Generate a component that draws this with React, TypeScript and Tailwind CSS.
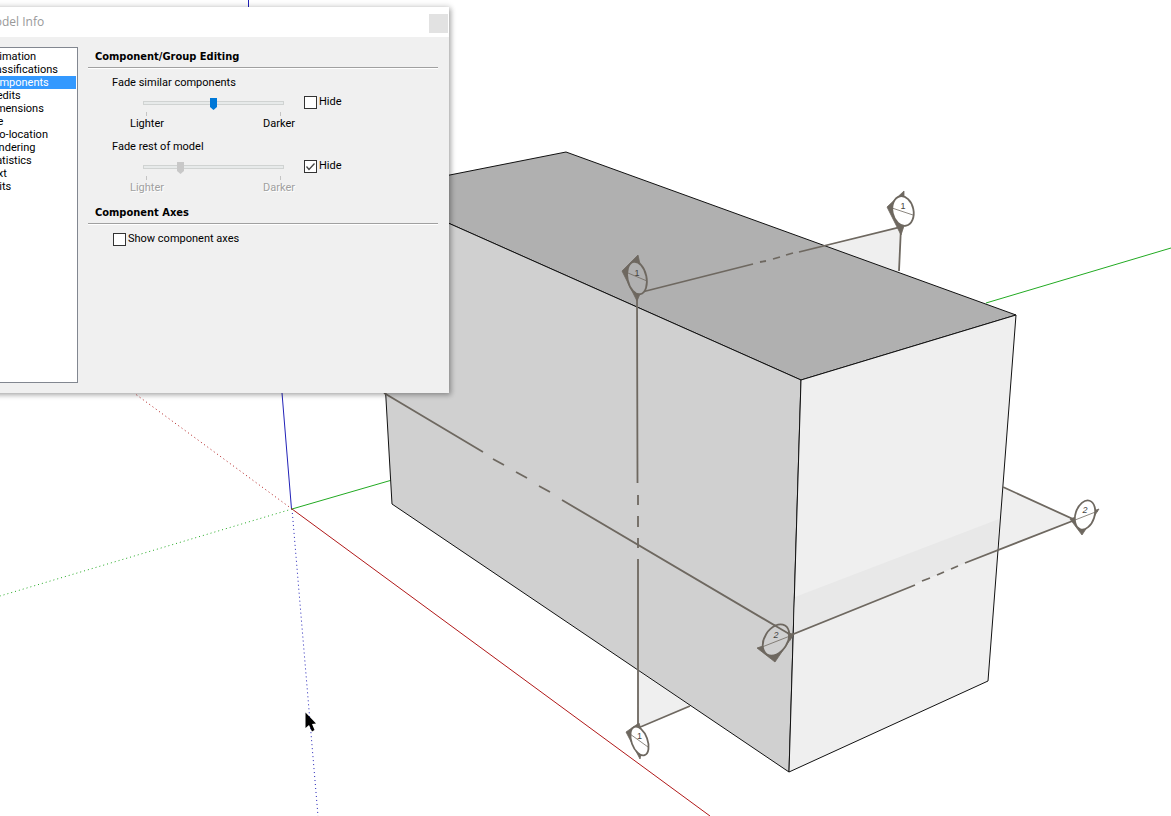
import React, { useState } from "react"

const categories = [
  "Animation",
  "Classifications",
  "Components",
  "Credits",
  "Dimensions",
  "File",
  "Geo-location",
  "Rendering",
  "Statistics",
  "Text",
  "Units",
]

interface CheckProps {
  label: string
  checked: boolean
  onChange: (value: boolean) => void
}

function Check({ label, checked, onChange }: CheckProps) {
  return (
    <label className="flex items-center gap-0.5 leading-4">
      <span className="relative flex">
        <input
          type="checkbox"
          checked={checked}
          onChange={(e) => onChange(e.target.checked)}
          className="size-[13px] appearance-none border border-[#333] bg-white"
        />
        {checked && (
          <svg viewBox="0 0 13 13" className="pointer-events-none absolute inset-0 size-full">
            <path d="M2.5 6.5 5 9.5 10.5 3.5" fill="none" stroke="#444" strokeWidth="1.3" />
          </svg>
        )}
      </span>
      {label}
    </label>
  )
}

interface FadeControlProps {
  title: string
  initial: number
  initialHidden: boolean
}

function FadeControl({ title, initial, initialHidden }: FadeControlProps) {
  const [value, setValue] = useState(initial)
  const [hidden, setHidden] = useState(initialHidden)

  return (
    <div className="mt-[7px] pl-6">
      <p className="leading-4">{title}</p>
      <div className="flex items-start">
        <div className="flex w-[192px] flex-col">
          <div className="ml-[31px] w-[141px] pt-1.5">
            <input
              type="range"
              aria-label={title}
              min={0}
              max={100}
              value={value}
              disabled={hidden}
              onChange={(e) => setValue(Number(e.target.value))}
              className="block h-3 w-full appearance-none bg-transparent [&::-webkit-slider-runnable-track]:h-1 [&::-webkit-slider-runnable-track]:border [&::-webkit-slider-runnable-track]:border-[#d0d3d2] [&::-webkit-slider-runnable-track]:bg-[#e7eaea] [&::-webkit-slider-thumb]:-mt-1 [&::-webkit-slider-thumb]:h-3 [&::-webkit-slider-thumb]:w-[7px] [&::-webkit-slider-thumb]:appearance-none [&::-webkit-slider-thumb]:bg-[#0078d7] [&::-webkit-slider-thumb]:[clip-path:polygon(0_0,100%_0,100%_75%,50%_100%,0_75%)] disabled:[&::-webkit-slider-thumb]:bg-[#c8c8c8]"
            />
            <div className="mt-[3px] flex h-1 justify-between px-[3px]">
              <span className="w-px bg-[#c4c4c4]" />
              <span className="w-px bg-[#c4c4c4]" />
            </div>
          </div>
          <div className={hidden ? "flex justify-between pr-[9px] pl-[18px] leading-4 text-[#a0a0a0] [text-shadow:1px_1px_#fff]" : "flex justify-between pr-[9px] pl-[18px] leading-4"}>
            <span>Lighter</span>
            <span>Darker</span>
          </div>
        </div>
        <div className="pt-[3px]">
          <Check label="Hide" checked={hidden} onChange={setHidden} />
        </div>
      </div>
    </div>
  )
}

function ModelInfo() {
  const [selected, setSelected] = useState("Components")
  const [showAxes, setShowAxes] = useState(false)

  return (
    <section className="absolute top-[7px] -left-[26px] w-[475px] bg-[#f0f0f0] font-[Roboto,'Noto_Sans',sans-serif] text-[11px] text-black shadow-[0_0_6px_1px_rgba(0,0,0,0.14),2px_2px_5px_rgba(0,0,0,0.25)]">
      <header className="flex h-[30px] items-center justify-between bg-white pr-px pl-2.5">
        <h1 className="font-['Open_Sans',sans-serif] text-[12px] text-[#999]">Model Info</h1>
        <button aria-label="Close" className="mt-0.5 size-[19px] bg-[#e2e2e2]" />
      </header>

      <div className="flex gap-2.5 pt-2.5 pr-[11px] pb-2.5 pl-2">
        <ul className="h-[336px] w-24 shrink-0 border border-[#828790] bg-white pt-[2px] pr-px">
          {categories.map((name) => (
            <li key={name}>
              <button
                onClick={() => setSelected(name)}
                className={name === selected ? "block w-full bg-[#3399ff] pl-[3px] text-left leading-[13px] text-white" : "block w-full pl-[3px] text-left leading-[13px]"}
              >
                {name}
              </button>
            </li>
          ))}
        </ul>

        <div className="flex-1 pt-px">
          <h2 className="border-b border-[#a0a0a0] pt-px pb-[2px] pl-[7px] font-['DejaVu_Sans_Condensed',sans-serif] leading-4 font-bold shadow-[0_1px_#fff]">Component/Group Editing</h2>
          <FadeControl title="Fade similar components" initial={50} initialHidden={false} />
          <FadeControl title="Fade rest of model" initial={25} initialHidden={true} />

          <h2 className="mt-2 border-b border-[#a0a0a0] pt-px pb-[2px] pl-[7px] font-['DejaVu_Sans_Condensed',sans-serif] leading-4 font-bold shadow-[0_1px_#fff]">Component Axes</h2>
          <div className="mt-[7px] pl-[25px]">
            <Check label="Show component axes" checked={showAxes} onChange={setShowAxes} />
          </div>
        </div>
      </div>
    </section>
  )
}

interface MarkerProps {
  label: string
  cx: number
  cy: number
  rx: number
  ry: number
  tilt: number
  arrow: string
  rule: string
  fill: string
}

// Section plane symbol: filled arrow behind a tilted circle
function Marker({ label, cx, cy, rx, ry, tilt, arrow, rule, fill }: MarkerProps) {
  return (
    <g>
      <path d={arrow} fill="#6e6860" stroke="#6e6860" strokeWidth="0.8" />
      <ellipse cx={cx} cy={cy} rx={rx} ry={ry} transform={`rotate(${tilt} ${cx} ${cy})`} fill={fill} stroke="#6e6860" strokeWidth="1.8" />
      <path d={rule} stroke="#6e6860" strokeWidth="0.8" />
      <text x={cx} y={cy - 2} textAnchor="middle" fontSize="9" fontStyle={label === "2" ? "italic" : "normal"} fontFamily="Liberation Sans, sans-serif" fill="#444">{label}</text>
    </g>
  )
}

function Scene() {
  return (
    <svg viewBox="0 0 1171 816" preserveAspectRatio="xMinYMin slice" className="block h-screen w-full">
      {/* Axes */}
      <g fill="none" strokeWidth="1">
        <path d="M248.5 0V8M282 393 291.5 509" stroke="#2222b8" />
        <path d="M292 509 318 816" stroke="#2222b8" strokeDasharray="1 3" />
        <path d="M292 509 392 480M986 303 1171 248" stroke="#22aa22" />
        <path d="M292 509 0 596" stroke="#22aa22" strokeDasharray="1 3" />
        <path d="M292 509 710 816" stroke="#b01818" />
        <path d="M292 509 134 393" stroke="#b01818" strokeDasharray="1 3" />
      </g>

      {/* Parts of the section planes outside the box */}
      <path d="M825 247 901 227 899 272ZM638 671V727L690 706ZM1003 487 1075 520 998 550Z" fill="#efefef" />

      {/* Box */}
      <g stroke="#111" strokeWidth="1" strokeLinejoin="round">
        <path d="M374 190 566 152 1016 315 801 380Z" fill="#b0b0b0" />
        <path d="M374 190 801 380 789 772 392 504Z" fill="#d0d0d0" />
        <path d="M801 380 1016 315 988 681 789 772Z" fill="#efefef" />
      </g>
      <path d="M795 597 999 519 997 550 794 634Z" fill="#e8e8e8" />

      {/* Section lines */}
      <g fill="none" stroke="#6e6860" strokeWidth="1.8">
        <path d="M638 293 753 264M760 262 766 261M773 259 780 257M786 255 793 253M799 252 901 227 899 271" />
        <path d="M637 294 637.5 483M638 495V505M638 516V527M638 538V548M638 559V728L690 706" />
        <path d="M384 393 483 452M493 459 504 465M516 472 527 478M539 486 550 492M562 500 791 635 915 585M922 581 930 578M937 575 944 572M951 569 958 566M965 563 1075 520 1003 487" />
      </g>

      <Marker label="1" cx={637} cy={278} rx={9.5} ry={16.5} tilt={-12} fill="#b0b0b0" arrow="M638 255 622 271 637 301 640 294V264Z" rule="M628 273 647 281" />
      <Marker label="1" cx={903} cy={211} rx={10.5} ry={15} tilt={-12} fill="#fff" arrow="M904 191 887 207 901 235 904 226V200Z" rule="M892 208 913 215" />
      <Marker label="1" cx={639.5} cy={741} rx={8} ry={15} tilt={-20} fill="#fff" arrow="M639 723 626 732 640 759 642 750V732Z" rule="M630 734 648 747" />
      <Marker label="2" cx={1085} cy={515} rx={9.5} ry={15} tilt={18} fill="#fff" arrow="M1070 519 1082 535 1099 509 1090 512Z" rule="M1075 520 1098 511" />
      <Marker label="2" cx={776} cy={640} rx={11.5} ry={17} tilt={32} fill="#d0d0d0" arrow="M757 648 775 662 794 634 786 638Z" rule="M762 647 790 636" />
      <path d="M774 625 791 635" stroke="#6e6860" strokeWidth="1.8" />
      <path d="M787 632 794 634 790 641Z" fill="#6e6860" />

      {/* Pointer */}
      <path d="M305.5 712.5V728L309 725 312 731.5 314.5 730 312 724 316 723.5Z" fill="#000" />
    </svg>
  )
}

export default function App() {
  return (
    <main className="relative min-h-screen overflow-hidden bg-white">
      <Scene />
      <ModelInfo />
    </main>
  )
}
